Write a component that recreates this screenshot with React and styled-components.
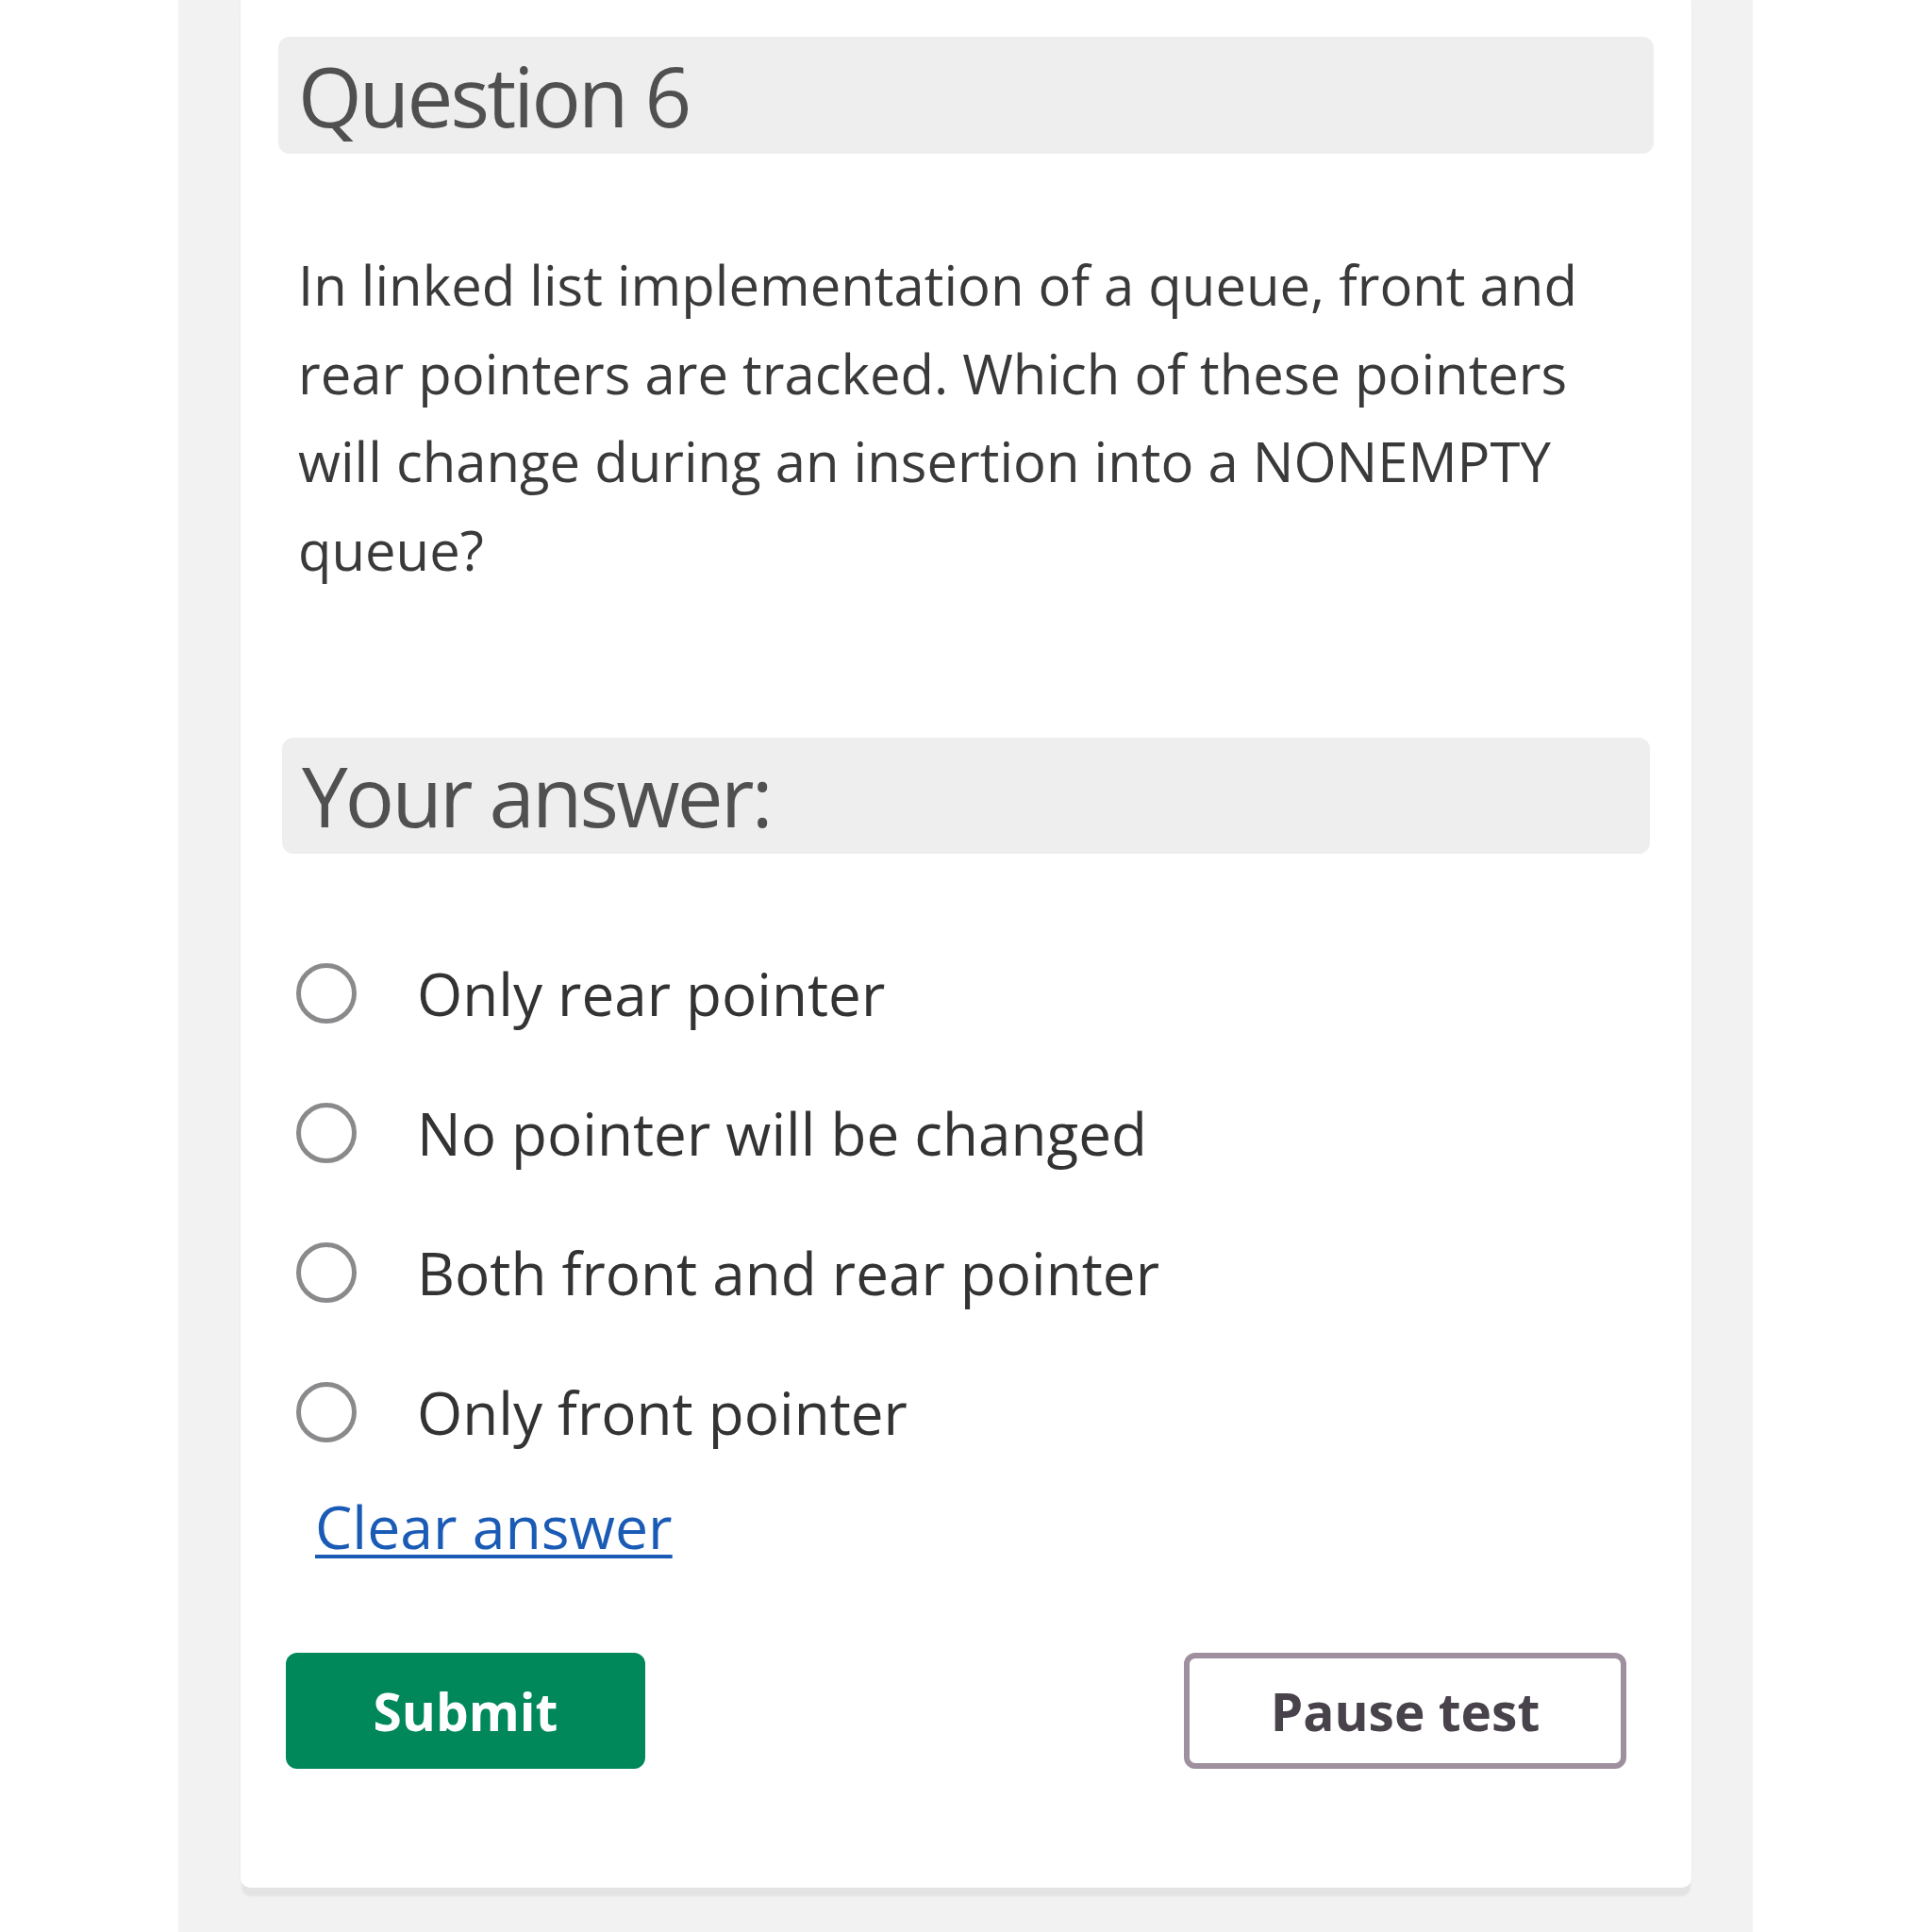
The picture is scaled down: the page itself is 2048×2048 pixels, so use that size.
import styled, { createGlobalStyle } from 'styled-components';

const GlobalStyle = createGlobalStyle`
  html, body {
    margin: 0;
    padding: 0;
    background: #ffffff;
  }
  body {
    font-family: "Open Sans", "Noto Sans", Arial, sans-serif;
  }
`;

const Page = styled.div`
  display: flex;
  padding-left: 189px;
  min-height: 2048px;
`;

const Backdrop = styled.div`
  width: 1669px;
  background: #f2f2f2;
  padding: 0 65px 0 66px;
  box-sizing: border-box;
`;

const Card = styled.main`
  background: #ffffff;
  border-radius: 0 0 10px 10px;
  padding: 39px 40px 126px;
  box-shadow: 0 10px 2px -1px #e3e3e3, 0 0 3px rgba(0, 0, 0, 0.05);
`;

const Banner = styled.h2`
  margin: 0 ${({ $inset }) => $inset || 0}px;
  height: ${({ $h }) => $h}px;
  line-height: ${({ $h }) => $h}px;
  padding: 0 21px;
  background: #eeeeee;
  border-radius: 12px;
  font-size: 87px;
  font-weight: 400;
  letter-spacing: -2.8px;
  color: #505050;
  white-space: nowrap;
`;

const Prompt = styled.p`
  margin: 92px 0 0;
  padding: 0 21px;
  max-width: 1416px;
  font-size: 58px;
  line-height: 93.6px;
  color: #3a3a3a;
`;

const AnswerBanner = styled(Banner)`
  margin-top: 153px;
`;

const Options = styled.div`
  display: flex;
  flex-direction: column;
  margin-top: 74px;
`;

const Option = styled.label`
  display: flex;
  align-items: center;
  height: 148px;
  gap: 64px;
  padding-left: 19px;
  cursor: pointer;
`;

const Radio = styled.span`
  width: 64px;
  height: 64px;
  flex-shrink: 0;
  box-sizing: border-box;
  border: 5px solid #8a8a8c;
  border-radius: 50%;
  background: #ffffff;
`;

const OptionText = styled.span`
  font-size: 62px;
  line-height: 84px;
  color: #333333;
  white-space: nowrap;
`;

const ClearLink = styled.a`
  display: inline-block;
  margin: 5px 0 0 39px;
  font-size: 62.5px;
  line-height: 84px;
  color: #1a5bb5;
  text-decoration: underline;
  text-decoration-thickness: 4px;
  text-underline-offset: 6px;
  cursor: pointer;
`;

const Actions = styled.div`
  display: flex;
  justify-content: space-between;
  align-items: center;
  margin-top: 92px;
  padding: 0 29px 0 8px;
`;

const Button = styled.button`
  height: 123px;
  width: ${({ $w }) => $w}px;
  box-sizing: border-box;
  border-radius: 12px;
  font-family: inherit;
  font-size: 55px;
  font-weight: 700;
  cursor: pointer;
  background: ${({ $primary }) => ($primary ? '#00875a' : '#ffffff')};
  color: ${({ $primary }) => ($primary ? '#ffffff' : '#48434b')};
  border: ${({ $primary }) => ($primary ? '0' : '6px solid #9e909f')};
`;

const options = [
  'Only rear pointer',
  'No pointer will be changed',
  'Both front and rear pointer',
  'Only front pointer',
];

export default function App() {
  return (
    <>
      <GlobalStyle />
      <Page>
        <Backdrop>
          <Card>
            <Banner $h={124}>Question 6</Banner>
            <Prompt>
              In linked list implementation of a queue, front and rear pointers are tracked. Which of
              these pointers will change during an insertion into a NONEMPTY queue?
            </Prompt>
            <AnswerBanner as="h3" $h={123} $inset={4}>Your answer:</AnswerBanner>
            <Options>
              {options.map(text => (
                <Option key={text}>
                  <Radio />
                  <OptionText>{text}</OptionText>
                </Option>
              ))}
            </Options>
            <ClearLink>Clear answer</ClearLink>
            <Actions>
              <Button $primary $w={381}>Submit</Button>
              <Button $w={469}>Pause test</Button>
            </Actions>
          </Card>
        </Backdrop>
      </Page>
    </>
  );
}
